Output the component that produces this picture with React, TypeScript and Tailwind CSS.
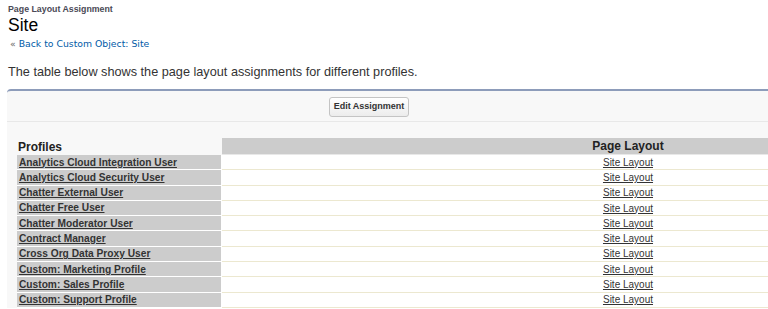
const profiles = [
  'Analytics Cloud Integration User',
  'Analytics Cloud Security User',
  'Chatter External User',
  'Chatter Free User',
  'Chatter Moderator User',
  'Contract Manager',
  'Cross Org Data Proxy User',
  'Custom: Marketing Profile',
  'Custom: Sales Profile',
  'Custom: Support Profile',
]

export default function App() {
  return (
    <div className="h-[309px] w-[768px] overflow-hidden bg-white font-['Liberation_Sans',Arial,sans-serif] text-[#333]">
      {/* Page header */}
      <div className="pl-[8px] pt-[3px]">
        <div className="text-[8.8px] font-bold leading-[12px] text-[#4a4a56]">Page Layout Assignment</div>
        <h1 className="text-[17.5px] leading-[21px] text-black">Site</h1>
        <div className="mt-[2px] pl-[2px] font-['DejaVu_Sans',Verdana,sans-serif] text-[9.3px] leading-[12px]">
          <span className="text-[#666]">« </span>
          <a href="#" className="text-[#015ba7]">Back to Custom Object: Site</a>
        </div>
      </div>

      <p className="mt-[15px] pl-[8px] text-[12.7px] leading-[14px] text-[#333]">
        The table below shows the page layout assignments for different profiles.
      </p>

      {/* Assignment block */}
      <div className="ml-[7px] mt-[10px] w-[1100px] rounded-tl-[4px] border-t-2 border-[#8d9cba] bg-[#f8f8f8]">
        <div className="h-[31px] border-b border-[#e8e8e8]">
          <div className="flex h-full w-[724px] items-center justify-center">
            <button className="mt-[1px] h-[20px] rounded-[3px] border border-[#c4c4c4] bg-gradient-to-b from-white to-[#ececec] px-[4px] text-[9px] font-bold text-[#333]">
              Edit Assignment
            </button>
          </div>
        </div>

        <div className="grid grid-cols-[205px_812px] pl-[10px] pt-[16px]">
          <div className="flex h-[17px] items-end pl-[1px] pb-[1px] text-[12px] font-bold leading-[14px] text-[#222]">Profiles</div>
          <div className="flex h-[17px] items-center justify-center border-b border-[#e8e8e8] bg-[#cccccc] text-[12px] font-bold text-[#222]">
            Page Layout
          </div>
          {profiles.map((p) => (
            <div key={p} className="contents">
              <div className="flex h-[15.3px] items-center border-b border-r border-white bg-[#cccccc] pl-[2px] text-[10.2px] font-bold text-[#333] underline">
                {p}
              </div>
              <div className="flex h-[15.3px] items-center justify-center border-b border-[#ece8d0] bg-white text-[10px] text-[#333] underline">
                Site Layout
              </div>
            </div>
          ))}
        </div>
      </div>
    </div>
  )
}
